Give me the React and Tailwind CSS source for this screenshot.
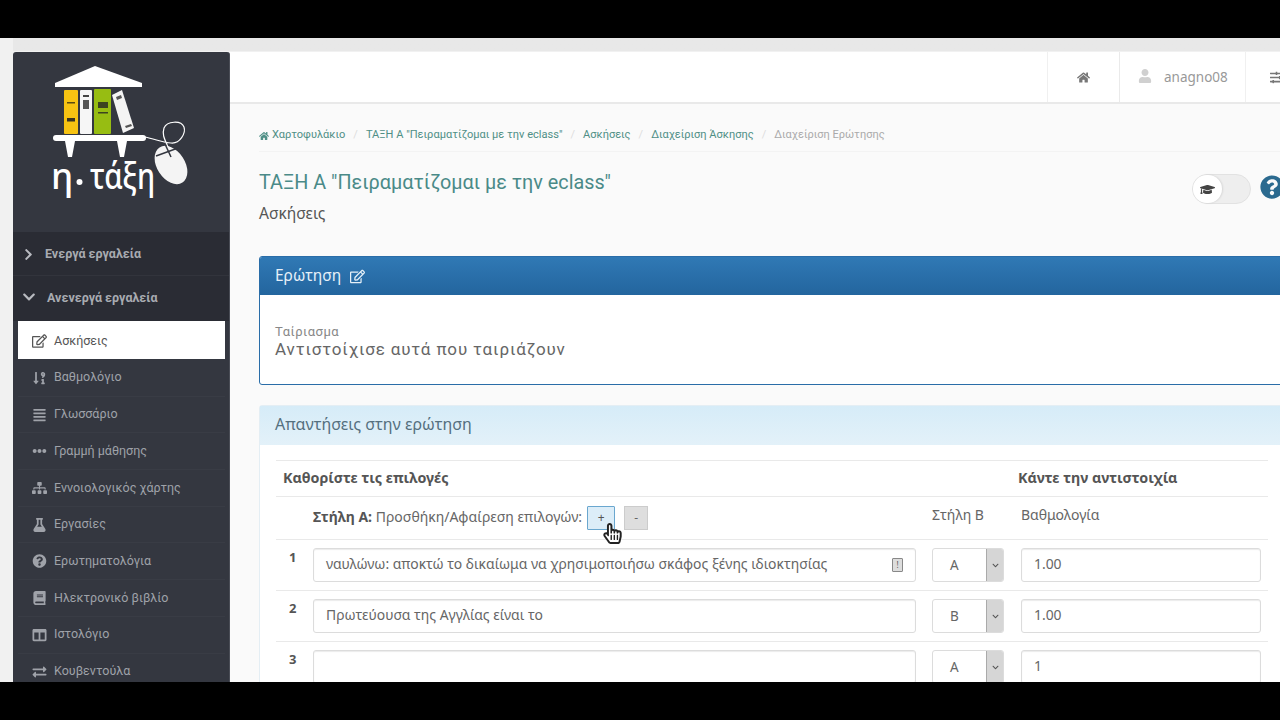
import React from "react";
import {
  FaHome, FaUser, FaRegEdit, FaGraduationCap, FaQuestionCircle, FaChevronRight, FaChevronDown,
  FaSortNumericDownAlt, FaAlignJustify, FaEllipsisH, FaSitemap, FaFlask, FaBook, FaColumns, FaExchangeAlt,
  FaSlidersH, FaRegHandPointer, FaHandPointer,
} from "react-icons/fa";

function Logo() {
  return (
    <svg width="160" height="145" viewBox="0 0 160 145" className="block">
      <polygon points="15,23 55,6 102,23" fill="#fff" />
      <rect x="15" y="23" width="87" height="4" fill="#fff" />
      <rect x="24" y="30" width="14" height="44" rx="1" fill="#f7c312" />
      <rect x="27" y="42" width="8" height="1.5" fill="#5a4a10" />
      <rect x="27" y="58" width="8" height="3.5" fill="#3a3420" />
      <rect x="40" y="30" width="12" height="44" rx="1" fill="#f6f6f6" />
      <rect x="43" y="35" width="6" height="2" fill="#444" />
      <rect x="43" y="40" width="6" height="9" fill="#555" />
      <rect x="54" y="29" width="17" height="45" rx="1" fill="#97bd12" />
      <rect x="58" y="42" width="10" height="6" fill="#3c4420" />
      <rect x="58" y="52" width="10" height="1.5" fill="#3c4420" />
      <polygon points="72,35 82,30 94,68 83,73" fill="#f4f4f4" />
      <polygon points="76,37 81,35 82,38 77,40" fill="#555" />
      <polygon points="85,66 91,64 92,66 86,68" fill="#555" />
      <rect x="13" y="75" width="93" height="6" rx="3" fill="#fff" />
      <polygon points="25,81 35,81 32,97 28,97" fill="#fff" />
      <polygon points="77,81 87,81 84,97 80,97" fill="#fff" />
      <path d="M105 77 C115 79 124 83 131 83 C140 84 146 73 144 67 C141 60 127 61 124 68 C122 74 124 78 128 87" fill="none" stroke="#fff" strokeWidth="1.2" />
      <ellipse cx="131" cy="105" rx="14" ry="21" transform="rotate(-33 131 105)" fill="#f4f4f4" />
      <path d="M116 96 L138 88" stroke="#33363f" strokeWidth="1.5" />
      <path d="M125 84 L131 97" stroke="#33363f" strokeWidth="1.5" />
      <text x="11" y="129" fill="#fff" fontSize="36" fontWeight="500" fontFamily="'Noto Sans', sans-serif">η</text>
      <circle cx="39.5" cy="122" r="3" fill="#fff" />
      <text x="50" y="129" fill="#fff" fontSize="36" fontWeight="500" fontFamily="'Noto Sans', sans-serif" textLength="65" lengthAdjust="spacingAndGlyphs">τάξη</text>
    </svg>
  );
}

const items = [
  [FaSortNumericDownAlt, "Βαθμολόγιο"],
  [FaAlignJustify, "Γλωσσάριο"],
  [FaEllipsisH, "Γραμμή μάθησης"],
  [FaSitemap, "Εννοιολογικός χάρτης"],
  [FaFlask, "Εργασίες"],
  [FaQuestionCircle, "Ερωτηματολόγια"],
  [FaBook, "Ηλεκτρονικό βιβλίο"],
  [FaColumns, "Ιστολόγιο"],
  [FaExchangeAlt, "Κουβεντούλα"],
];

function Sidebar() {
  return (
    <aside className="w-[217px] shrink-0 bg-[#343740] rounded-t-[3px] font-['Roboto',sans-serif] border-r border-[#4a4d56]">
      <div className="h-[180px] pl-[27px] pt-[8px]">
        <Logo />
      </div>
      <div className="bg-[#2a2c34] text-[#a8abb1] font-bold text-[12.5px]">
        <div className="h-[44px] flex items-center pl-[9px] gap-[10px] border-b border-[#32343c] pt-[1px]">
          <FaChevronRight className="text-[13px] text-[#b8bac0]" />
          <span>Ενεργά εργαλεία</span>
        </div>
        <div className="h-[45px] flex items-center pl-[9px] gap-[11px]">
          <FaChevronDown className="text-[14px] text-[#b8bac0] -mt-[3px]" />
          <span>Ανενεργά εργαλεία</span>
        </div>
      </div>
      <div className="pl-[5px] pr-[4px]">
        <div className="h-[38px] mb-[1px] pt-[2px] bg-white flex items-center pl-[14px] gap-[7px] text-[12.5px] text-[#555]">
          <FaRegEdit className="text-[14px] w-[15px] text-[#555]" />
          <span>Ασκήσεις</span>
        </div>
        {items.map(([Icon, label]) => (
          <div key={label} className="h-[36.7px] flex items-center pl-[14px] gap-[7px] text-[12.5px] text-[#9fa2a9] border-b border-[#393c45] last:border-b-0">
            <Icon className="text-[14px] w-[15px] shrink-0" />
            <span>{label}</span>
          </div>
        ))}
      </div>
    </aside>
  );
}

function TopNav() {
  return (
    <div className="h-[52px] bg-white border-b-2 border-[#e9e9e9] flex justify-end text-[#999] text-[13.5px]">
      <div className="w-[72px] flex items-center justify-center border-l border-[#f0f0f0]">
        <FaHome className="text-[13px] text-[#777]" />
      </div>
      <div className="w-[126px] flex items-center pl-[18px] gap-[12px] border-l border-[#eaeaea]">
        <FaUser className="text-[14px] text-[#d0d0d0] -mt-[3px]" />
        <span className="mt-[1px]">anagno08</span>
      </div>
      <div className="w-[35px] flex items-center pl-[24px] border-l border-[#f0f0f0] overflow-hidden">
        <FaSlidersH className="text-[13px] text-[#777] shrink-0" />
      </div>
    </div>
  );
}

function Breadcrumb() {
  const crumbs = ["ΤΑΞΗ Α \"Πειραματίζομαι με την eclass\"", "Ασκήσεις", "Διαχείριση Άσκησης"];
  return (
    <div className="h-[48px] pt-[16px] flex items-center text-[11.05px] text-[#4f8f86] border-b border-[#f3f3f3] font-['Roboto',sans-serif]">
      <FaHome className="text-[10px] mr-[3px]" />
      <span>Χαρτοφυλάκιο</span>
      {crumbs.map((c) => (
        <React.Fragment key={c}>
          <span className="mx-[8px] text-[#ddd]">/</span>
          <span>{c}</span>
        </React.Fragment>
      ))}
      <span className="mx-[8px] text-[#ddd]">/</span>
      <span className="text-[#aaa]">Διαχείριση Ερώτησης</span>
    </div>
  );
}

function TextBox({ value, width, right }) {
  return (
    <div className={`${width} h-[34px] shrink-0 bg-white border border-[#dcdcdc] rounded-[3px] shadow-[inset_0_1px_1px_rgba(0,0,0,0.08)] flex items-center justify-between px-[12px] text-[13.9px] text-[#666]`}>
      <span className="whitespace-nowrap mb-[2px]">{value}</span>
      {right}
    </div>
  );
}

function SelectBox({ value }) {
  return (
    <div className="w-[72px] h-[34px] shrink-0 ml-[16px] bg-white border border-[#dcdcdc] rounded-[3px] flex items-center overflow-hidden text-[13.5px] text-[#666]">
      <span className="flex-1 pl-[17px]">{value}</span>
      <span className="w-[17px] h-full bg-[#d6d6d6] border-l border-[#aaa] flex items-center justify-center">
        <FaChevronDown className="text-[7px] text-[#555]" />
      </span>
    </div>
  );
}

function Row({ n, text, sel, score, right }) {
  return (
    <div className="h-[51px] flex pt-[8px] border-t border-[#e9e9e9]">
      <div className="w-[37px] pl-[13px] text-[13px] leading-[18px] font-bold text-[#555]">{n}</div>
      <TextBox value={text} width="w-[603px]" right={right} />
      <SelectBox value={sel} />
      <div className="ml-[17px]">
        <TextBox value={score} width="w-[240px]" />
      </div>
    </div>
  );
}

function Panels() {
  return (
    <>
      <section className="mt-[32px] h-[129px] border border-[#2a6da8] rounded-[3px] bg-white overflow-hidden">
        <div className="h-[38px] bg-gradient-to-b from-[#3079b5] to-[#23659e] flex items-center pl-[15px] gap-[9px] text-[15.5px] text-[#e6f0f8]">
          <span>Ερώτηση</span>
          <FaRegEdit className="text-[15px]" />
        </div>
        <div className="pl-[15px] pt-[29px] font-['Roboto',sans-serif]">
          <div className="text-[13px] leading-[15px] tracking-[0.5px] text-[#888]">Ταίριασμα</div>
          <div className="text-[17px] leading-[20px] tracking-[0.85px] text-[#666]">Αντιστοίχισε αυτά που ταιριάζουν</div>
        </div>
      </section>
      <section className="mt-[20px] rounded-t-[3px] bg-white border border-[#e4eef4]">
        <div className="h-[39px] pb-[3px] bg-gradient-to-b from-[#d6ecf8] to-[#e3f1f9] flex items-center pl-[15px] text-[16px] text-[#55707f]">
          Απαντήσεις στην ερώτηση
        </div>
        <div className="mx-[16px] mt-[15px] border-t border-[#e9e9e9]">
          <div className="h-[35px] pb-[1px] flex items-center justify-between text-[14.3px] font-bold text-[#555]">
            <span className="pl-[7px]">Καθορίστε τις επιλογές</span>
            <span className="w-[250px]">Κάντε την αντιστοιχία</span>
          </div>
          <div className="h-[43px] flex border-t border-[#e9e9e9] text-[14px] text-[#666]">
            <div className="w-[640px] pl-[37px] flex items-center gap-[5px]">
              <span className="whitespace-nowrap mb-[4px]"><b className="text-[#555]">Στήλη Α:</b> Προσθήκη/Αφαίρεση επιλογών:</span>
              <div className="relative w-[28px] h-[24px] bg-[#dcedf8] border border-[#6aa7cf] flex items-center justify-center text-[12px] text-[#555] rounded-[1px]">
                +
                <FaHandPointer className="absolute left-[14px] top-[16px] text-[21px] text-white" />
                <FaRegHandPointer className="absolute left-[14px] top-[16px] text-[21px] text-[#222]" />
              </div>
              <div className="w-[24px] h-[24px] ml-[4px] bg-[#dedede] border border-[#ccc] flex items-center justify-center text-[12px] text-[#666]">-</div>
            </div>
            <div className="w-[105px] pl-[16px] pt-[7px]">Στήλη Β</div>
            <div className="pt-[7px]">Βαθμολογία</div>
          </div>
          <Row n="1" text="ναυλώνω: αποκτώ το δικαίωμα να χρησιμοποιήσω σκάφος ξένης ιδιοκτησίας" sel="Α" score="1.00"
            right={<span className="w-[11px] h-[14px] border border-[#888] bg-[#ddd] rounded-[1px] flex items-center justify-center text-[8px] leading-none text-[#555]">!</span>} />
          <Row n="2" text="Πρωτεύουσα της Αγγλίας είναι το" sel="Β" score="1.00" />
          <Row n="3" text="" sel="Α" score="1" />
        </div>
      </section>
    </>
  );
}

export default function App() {
  return (
    <div className="w-[1280px] h-[720px] bg-black overflow-hidden font-['Noto_Sans',sans-serif]">
      <div className="h-[38px]" />
      <div className="h-[644px] bg-[#f1f1f1] overflow-hidden flex">
        <div className="w-[13px] shrink-0" />
        <div className="flex-1 min-w-0 pt-[14px] flex bg-gradient-to-b from-[#e8e8e8] from-[2%] to-[#f1f1f1] to-[2%]">
          <Sidebar />
          <main className="w-[1050px] shrink-0 bg-[#fafafa]">
            <TopNav />
            <div className="pl-[29px] w-[1055px]">
              <Breadcrumb />
              <div className="h-[72px] pt-[18px] relative">
                <h1 className="text-[19.8px] leading-[26px] text-[#4a8a88] font-['Roboto',sans-serif]">ΤΑΞΗ Α "Πειραματίζομαι με την eclass"</h1>
                <p className="text-[15.6px] leading-[20px] mt-[7px] text-[#555]">Ασκήσεις</p>
                <div className="absolute left-[933px] top-[22px] w-[59px] h-[30px] rounded-full bg-[#eeeeee] border border-[#e2e2e2]">
                  <div className="w-[29px] h-[28px] rounded-full bg-white flex items-center justify-center shadow-[1px_0_2px_rgba(0,0,0,0.1)]">
                    <FaGraduationCap className="text-[15px] text-[#444]" />
                  </div>
                </div>
                <FaQuestionCircle className="absolute left-[1001px] top-[23px] text-[24px] text-[#2b6a8f]" />
              </div>
              <Panels />
            </div>
          </main>
        </div>
      </div>
    </div>
  );
}
